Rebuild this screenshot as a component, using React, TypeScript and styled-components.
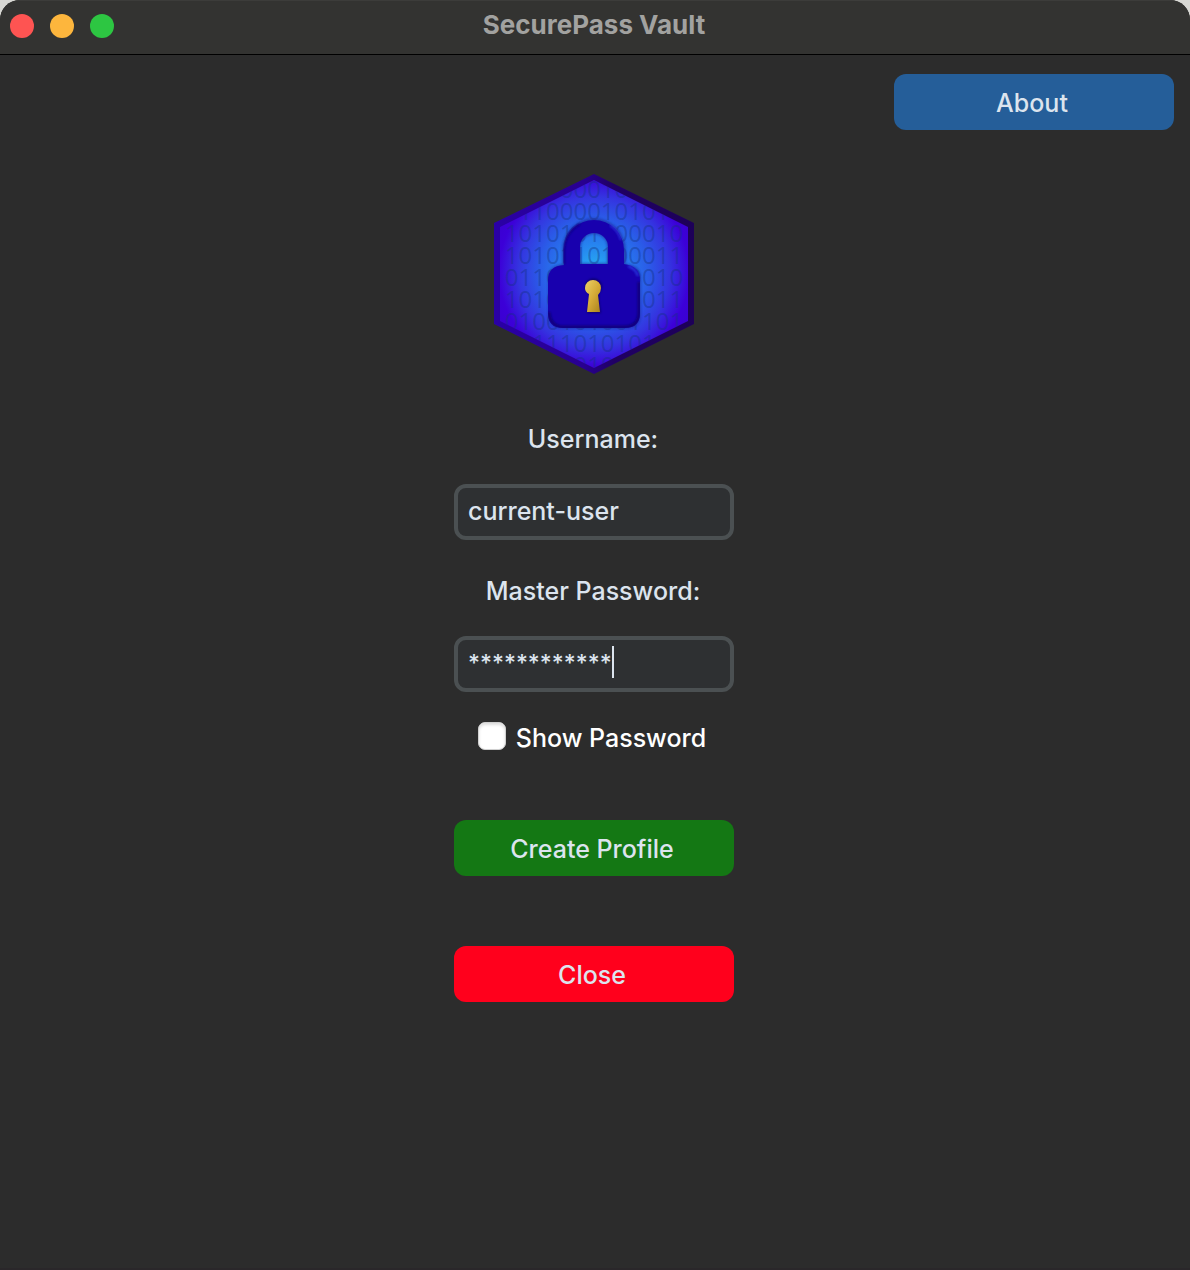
import React, { useState } from "react";
import styled, { createGlobalStyle } from "styled-components";

const GlobalStyle = createGlobalStyle`
  *, *::before, *::after { box-sizing: border-box; }
  body { margin: 0; background: #d8d8d4; }
  button, input { font: inherit; }
`;

const Window = styled.div`
  min-height: 100vh;
  display: flex;
  flex-direction: column;
  overflow: hidden;
  border-radius: 20px 20px 0 0;
  border-bottom: 2px solid #2a272a;
  background: #2c2c2c;
  color: #dce4ee;
  font-family: Inter, "Liberation Sans", sans-serif;
  font-size: 25px;
  font-weight: 500;
  line-height: 32px;
`;

const TitleBar = styled.header`
  display: grid;
  grid-template-columns: 1fr auto 1fr;
  align-items: center;
  height: 55px;
  padding: 0 12px 2px 10px;
  border-bottom: 1px solid #000;
  background: #333331;
  box-shadow: inset 0 1px 0 #3c3c3a;
`;

const Lights = styled.div`
  display: flex;
  gap: 16px;
`;

const Light = styled.button<{ $color: string }>`
  width: 24px;
  height: 24px;
  padding: 0;
  border: 0;
  border-radius: 50%;
  background: ${(p) => p.$color};
`;

const Title = styled.h1`
  margin: 0;
  padding-bottom: 2px;
  color: #a2a2a0;
  font-size: 26px;
  font-weight: 700;
`;

const Content = styled.main`
  display: flex;
  flex-direction: column;
  align-items: center;
  padding: 19px 16px 32px 14px;
`;

const Toolbar = styled.div`
  align-self: stretch;
  display: flex;
  justify-content: flex-end;
  margin-bottom: 44px;
`;

const Button = styled.button<{ $color: string }>`
  width: 280px;
  height: 56px;
  padding: 2px 4px 0 0;
  border: 0;
  border-radius: 12px;
  background: ${(p) => p.$color};
  color: #dce4ee;
`;

const Logo = styled.svg`
  display: block;
  width: 200px;
  height: 200px;
`;

const Form = styled.form`
  display: flex;
  flex-direction: column;
  align-items: center;
  padding-top: 49px;
`;

const Field = styled.div`
  display: flex;
  flex-direction: column;
  align-items: center;
  gap: 29px;
  margin-bottom: 35px;

  & + & {
    margin-bottom: 30px;
  }
`;

const Label = styled.label`
  padding-right: 2px;
`;

const InputBox = styled.div`
  position: relative;
`;

const Input = styled.input<{ $masked?: boolean }>`
  display: block;
  width: 280px;
  height: 56px;
  padding: 0 10px 2px;
  border: 4px solid #4b5052;
  border-radius: 12px;
  outline: 0;
  background: #2e3032;
  color: #dce4ee;
  font-size: ${(p) => (p.$masked ? 23 : 25)}px;
`;

const Caret = styled.span`
  position: absolute;
  top: 10px;
  left: 158px;
  width: 2px;
  height: 32px;
  background: #dce4ee;
`;

const CheckRow = styled.label`
  display: flex;
  align-items: flex-start;
  gap: 10px;
  margin-bottom: 66px;
  padding-right: 4px;
  color: #fff;
`;

const Checkbox = styled.input`
  appearance: none;
  width: 28px;
  height: 28px;
  margin: 0;
  border: 1px solid #d0d0d0;
  border-radius: 7px;
  background: #fff;
  box-shadow: inset 0 2px 3px #dcdcdc;

  &:checked {
    background: #3a7bd5;
  }
`;

const Actions = styled.div`
  display: flex;
  flex-direction: column;
  gap: 70px;
`;

const digitRows = [
  { y: 24, digits: "00010" },
  { y: 46, digits: "11000010101" },
  { y: 68, digits: "1010101100010" },
  { y: 90, digits: "1010110100011" },
  { y: 112, digits: "0110101010010" },
  { y: 134, digits: "1010110101011" },
  { y: 156, digits: "0100101001101" },
  { y: 178, digits: "01110101010" },
  { y: 200, digits: "010" },
];

function VaultLogo() {
  return (
    <Logo viewBox="0 0 200 200" role="img" aria-label="SecurePass Vault logo">
      <defs>
        <radialGradient id="glow" gradientUnits="userSpaceOnUse" cx="100" cy="98" r="108">
          <stop offset="0" stopColor="#27b4f2" />
          <stop offset="0.22" stopColor="#268af0" />
          <stop offset="0.5" stopColor="#2a5ce8" />
          <stop offset="0.7" stopColor="#3434e0" />
          <stop offset="0.88" stopColor="#3c00d8" />
          <stop offset="1" stopColor="#3a00d0" />
        </radialGradient>
        <linearGradient id="rim" x1="0" y1="0" x2="1" y2="0">
          <stop offset="0" stopColor="#2a00a6" />
          <stop offset="0.45" stopColor="#280090" />
          <stop offset="0.6" stopColor="#200064" />
          <stop offset="1" stopColor="#1d0058" />
        </linearGradient>
        <linearGradient id="gold" x1="0" y1="0" x2="1" y2="1">
          <stop offset="0" stopColor="#ecd068" />
          <stop offset="0.5" stopColor="#d6ac38" />
          <stop offset="1" stopColor="#a8801c" />
        </linearGradient>
        <filter id="soft" x="-20%" y="-20%" width="140%" height="140%">
          <feGaussianBlur stdDeviation="1" />
        </filter>
        <clipPath id="face">
          <path d="M100 6 194 53V147L100 194 6 147V53Z" />
        </clipPath>
        <clipPath id="lockShape">
          <path d="M69 92V75A31 31 0 0 1 131 75V90Q146 90 146 104V139Q146 154 131 154H69Q54 154 54 139V104Q54 92 69 92Z" />
        </clipPath>
      </defs>
      <path d="M100 0 200 49V150L100 200 0 150V49Z" fill="url(#rim)" />
      <path d="M100 6 194 53V147L100 194 6 147V53Z" fill="url(#glow)" />
      <text
        clipPath="url(#face)"
        fill="#12307c"
        fillOpacity="0.4"
        fontFamily="Open Sans, sans-serif"
        fontSize="24"
        fontWeight="400"
        textAnchor="middle"
      >
        {digitRows.map((row) => (
          <tspan key={row.y} x="100" y={row.y}>
            {row.digits}
          </tspan>
        ))}
      </text>
      <path
        fillRule="evenodd"
        d="M68 90V76A32 32 0 0 1 132 76V90Q147 91 147 105V140Q147 155 131 155H70Q54 155 54 140V105Q54 92 68 90ZM87 89H113V73A13 13 0 0 0 87 73Z"
        fill="#1a2a9c"
        opacity="0.6"
        filter="url(#soft)"
      />
      <path
        fillRule="evenodd"
        d="M70 91V76A30 30 0 0 1 130 76V90Q146 92 146 106V139Q146 154 131 154H69Q54 154 54 139V106Q54 92 70 91ZM86 90H114V73A14 14 0 0 0 86 73Z"
        fill="#1800ae"
      />
      <g clipPath="url(#lockShape)" fill="none" filter="url(#soft)">
        <path d="M116 51Q124 56 127 66" stroke="#2c30d8" strokeWidth="2" />
        <path d="M134 92Q142 95 144 102" stroke="#2c38e0" strokeWidth="2" />
        <path d="M55 138Q56 153 70 153H130Q145 153 145 138V108" stroke="#100078" strokeWidth="3" />
        <path d="M70 90V76Q71 58 86 50" stroke="#100088" strokeWidth="2" />
      </g>
      <path
        d="M95 119Q91 116 91 113A8 8 0 0 1 108 113Q108 116 105 119V127L107 139H93L95 127Z"
        fill="#0c0050"
        opacity="0.7"
        filter="url(#soft)"
      />
      <path
        d="M95 120Q91 118 91 114A8 8 0 0 1 107 114Q107 118 104 121L106 138H93Z"
        fill="url(#gold)"
      />
    </Logo>
  );
}

export default function App() {
  const [username, setUsername] = useState("current-user");
  const [password, setPassword] = useState("************");
  const [show, setShow] = useState(false);

  return (
    <>
      <GlobalStyle />
      <Window>
        <TitleBar>
          <Lights>
            <Light type="button" $color="#fe5452" aria-label="Close window" />
            <Light type="button" $color="#fdb63d" aria-label="Minimize window" />
            <Light type="button" $color="#2dc642" aria-label="Zoom window" />
          </Lights>
          <Title>SecurePass Vault</Title>
        </TitleBar>
        <Content>
          <Toolbar>
            <Button type="button" $color="#255e99">About</Button>
          </Toolbar>
          <VaultLogo />
          <Form onSubmit={(e) => e.preventDefault()}>
            <Field>
              <Label htmlFor="username">Username:</Label>
              <Input
                id="username"
                value={username}
                onChange={(e) => setUsername(e.target.value)}
              />
            </Field>
            <Field>
              <Label htmlFor="password">Master Password:</Label>
              <InputBox>
                <Input
                  id="password"
                  $masked
                  autoComplete="off"
                  value={password}
                  onChange={(e) => setPassword(e.target.value)}
                />
                <Caret />
              </InputBox>
            </Field>
            <CheckRow>
              <Checkbox
                type="checkbox"
                checked={show}
                onChange={(e) => setShow(e.target.checked)}
              />
              Show Password
            </CheckRow>
            <Actions>
              <Button type="submit" $color="#147814">Create Profile</Button>
              <Button type="button" $color="#ff001c">Close</Button>
            </Actions>
          </Form>
        </Content>
      </Window>
    </>
  );
}
